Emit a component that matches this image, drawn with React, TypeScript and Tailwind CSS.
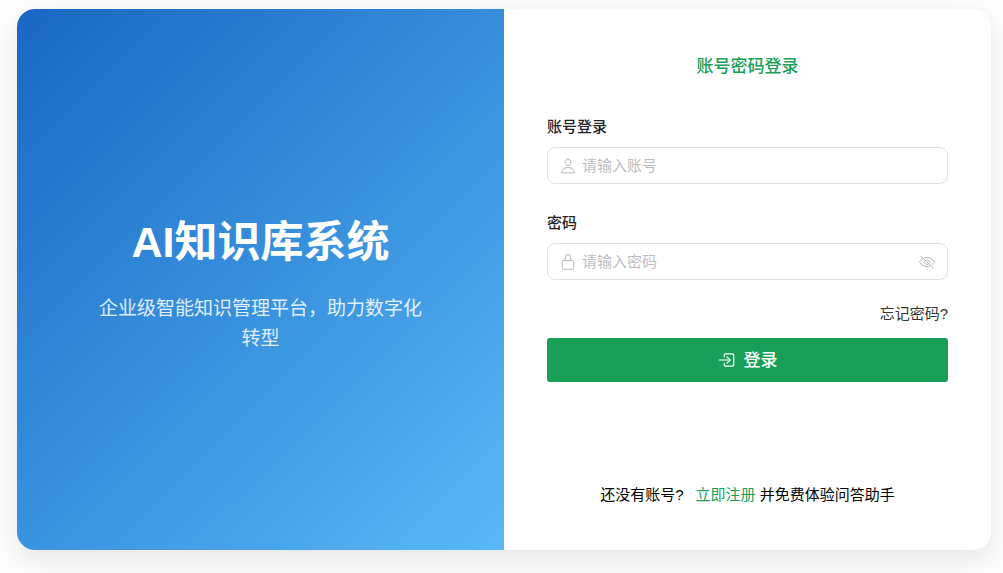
import React from 'react';

const iconProps = {
  viewBox: '0 0 512 512',
  fill: 'none',
  stroke: 'currentColor',
  strokeLinecap: 'round' as const,
  strokeLinejoin: 'round' as const,
  'aria-hidden': true,
};

const UserIcon = () => (
  <svg {...iconProps} strokeWidth={32} className="h-4 w-4 shrink-0">
    <path d="M352 136c-4 58-46 106-96 106s-92-48-96-106c-4-60 38-104 96-104s100 45 96 104z" />
    <path d="M256 304c-96 0-190 52-208 146-2 12 5 26 18 26h380c13 0 20-14 18-26C446 356 352 304 256 304z" />
  </svg>
);

const LockIcon = () => (
  <svg {...iconProps} strokeWidth={32} className="h-4 w-4 shrink-0">
    <path d="M346 204v-92a90 90 0 0 0-180 0v92" />
    <rect x="72" y="204" width="368" height="284" rx="48" />
  </svg>
);

const EyeOffIcon = () => (
  <svg {...iconProps} strokeWidth={32} className="h-4 w-4">
    <path d="M64 64l384 384" />
    <path d="M142 142C92 170 46 212 24 242c-5 9-5 18 0 27 38 62 125 131 232 131 42 0 80-12 113-30" />
    <path d="M194 120c20-5 41-8 62-8 107 0 192 66 232 130 5 9 5 18 0 27-14 23-38 47-63 68" />
    <path d="M202 202a76 76 0 0 0 108 108" />
    <path d="M256 180a76 76 0 0 1 76 76" />
  </svg>
);

const EnterIcon = () => (
  <svg {...iconProps} strokeWidth={34} className="h-[18px] w-[18px]">
    <path d="M176 160v-40a40 40 0 0 1 40-40h192a40 40 0 0 1 40 40v272a40 40 0 0 1-40 40H216a40 40 0 0 1-40-40v-40" />
    <path d="M256 344l88-88-88-88" />
    <path d="M32 256h304" />
  </svg>
);

interface FieldProps {
  id: string;
  label: string;
  type: string;
  placeholder: string;
  icon: React.ReactNode;
  suffix?: React.ReactNode;
}

const Field: React.FC<FieldProps> = ({ id, label, type, placeholder, icon, suffix }) => (
  <div>
    <label htmlFor={id} className="mb-[7px] block text-[15px] leading-[26px] font-medium text-[#1f2225]">
      {label}
    </label>
    <div className="flex h-[37px] items-center gap-1.5 rounded-lg border border-[#e0e0e6] bg-white px-3 text-[#b6b6ba] focus-within:border-[#18a058]">
      {icon}
      <input
        id={id}
        type={type}
        placeholder={placeholder}
        className="min-w-0 flex-1 bg-transparent pt-0.5 text-[15px] text-[#1f2225] outline-none placeholder:text-[#bdbdc1]"
      />
      {suffix}
    </div>
  </div>
);

const LoginForm = () => (
  <form onSubmit={(e) => e.preventDefault()} className="flex w-1/2 flex-col px-[43px] pt-[46px] pb-[43px]">
    <h2 className="mb-[35px] text-center text-[17px] leading-6 font-medium text-[#18a058]">账号密码登录</h2>

    <div className="flex flex-col gap-[26px]">
      <Field id="account" label="账号登录" type="text" placeholder="请输入账号" icon={<UserIcon />} />
      <Field
        id="password"
        label="密码"
        type="password"
        placeholder="请输入密码"
        icon={<LockIcon />}
        suffix={
          <button type="button" aria-label="显示密码" className="shrink-0 cursor-pointer">
            <EyeOffIcon />
          </button>
        }
      />
    </div>

    <a href="#forgot" className="mt-[22px] self-end text-[15px] leading-6 text-[#333639]">
      忘记密码?
    </a>

    <button
      type="submit"
      className="mt-3 flex h-11 w-full cursor-pointer items-center justify-center gap-2 rounded-[3px] bg-[#18a058] text-[17px] font-medium text-white"
    >
      <EnterIcon />
      <span className="pt-0.5">登录</span>
    </button>

    <p className="mt-[101px] text-center text-[15px] leading-6 text-black">
      还没有账号?
      <a href="#register" className="ml-3 text-[#18a058]">
        立即注册
      </a>{' '}
      并免费体验问答助手
    </p>
  </form>
);

export default function App() {
  return (
    <main className="min-h-screen bg-[#fdfdfd] pt-[9px] pr-3 pb-6 pl-[17px] font-['Liberation_Sans','Noto_Sans_CJK_SC',sans-serif]">
      <div className="flex overflow-hidden rounded-[18px] bg-white shadow-[0_9px_30px_rgba(0,0,0,0.1)]">
        <section className="flex w-1/2 flex-col items-center justify-center bg-[linear-gradient(135deg,#1967c3_0%,#3a94df_55%,#5ab8f6_100%)] px-20 text-center text-white">
          <h1 className="mb-4 text-[43px] leading-[72px] font-bold">AI知识库系统</h1>
          <p className="text-[19px] leading-[30px] text-white/85">企业级智能知识管理平台，助力数字化转型</p>
        </section>
        <LoginForm />
      </div>
    </main>
  );
}
